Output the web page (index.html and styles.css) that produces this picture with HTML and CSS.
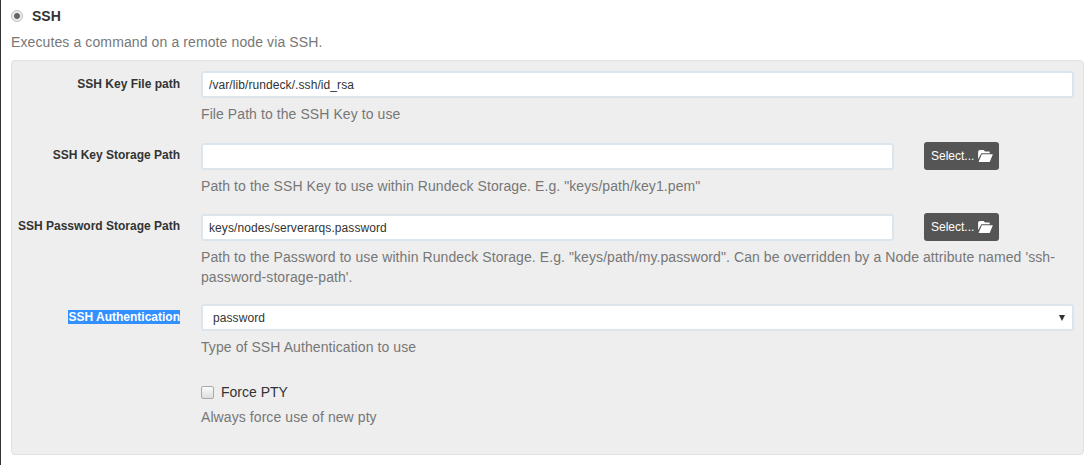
FILE: index.html
```html
<!DOCTYPE html>
<html lang="en">
<head>
  <meta charset="UTF-8" />
  <title>SSH Node Executor</title>
  <link rel="stylesheet" href="styles.css">
</head>
<body>

  <section class="page">
    <label class="provider">
      <input type="radio" class="radio" name="provider" checked>
      <b>SSH</b>
    </label>
    <p class="help provider-help">Executes a command on a remote node via SSH.</p>

    <div class="well">
      <div class="row">
        <label class="row-label">SSH Key File path</label>
        <div class="row-body">
          <input type="text" class="text-field" value="/var/lib/rundeck/.ssh/id_rsa">
          <p class="help">File Path to the SSH Key to use</p>
        </div>
      </div>

      <div class="row">
        <label class="row-label">SSH Key Storage Path</label>
        <div class="row-body">
          <div class="picker">
            <input type="text" class="text-field" value="">
            <button class="btn-select">Select...
              <svg class="folder" viewBox="0 0 16 13"><path d="M2 0h4l1.500 1.500h5V3.500H3.500L0 10V2q0-2 2-2z"/><path d="M4 4.500h12L12.500 13H.500z"/></svg>
            </button>
          </div>
          <p class="help">Path to the SSH Key to use within Rundeck Storage. E.g. "keys/path/key1.pem"</p>
        </div>
      </div>

      <div class="row">
        <label class="row-label">SSH Password Storage Path</label>
        <div class="row-body">
          <div class="picker">
            <input type="text" class="text-field" value="keys/nodes/serverarqs.password">
            <button class="btn-select">Select...
              <svg class="folder" viewBox="0 0 16 13"><path d="M2 0h4l1.500 1.500h5V3.500H3.500L0 10V2q0-2 2-2z"/><path d="M4 4.500h12L12.500 13H.500z"/></svg>
            </button>
          </div>
          <p class="help">Path to the Password to use within Rundeck Storage. E.g. "keys/path/my.password". Can be overridden by a Node attribute named 'ssh-password-storage-path'.</p>
        </div>
      </div>

      <div class="row">
        <label class="row-label"><span class="selected">SSH Authentication</span></label>
        <div class="row-body">
          <div class="select-wrap">
            <select class="text-field select-field">
              <option>password</option>
              <option>privateKey</option>
            </select>
          </div>
          <p class="help">Type of SSH Authentication to use</p>
        </div>
      </div>

      <div class="row row-check">
        <div class="row-label"></div>
        <div class="row-body">
          <label class="check">
            <input type="checkbox" class="checkbox">
            Force PTY
          </label>
          <p class="help">Always force use of new pty</p>
        </div>
      </div>
    </div>
  </section>

</body>
</html>
```

FILE: styles.css
```css
body {
  margin: 0;
  padding: 0;
  font-family: 'Liberation Sans', Arial, sans-serif;
  font-size: 14px;
  color: #333;
  background: #fff;
}

.page {
  height: 465px;
  box-sizing: border-box;
  border-left: 1px solid #333;
  padding: 7px 8px 0 10px;
  overflow: hidden;
}

.provider {
  display: flex;
  align-items: center;
  height: 18px;
  font-size: 14px;
}

.provider b {
  margin-left: 9px;
}

.radio {
  appearance: none;
  width: 12px;
  height: 12px;
  margin: 0;
  border: 1px solid #bdbdbd;
  border-radius: 50%;
  background: radial-gradient(circle, #666 0, #666 2.5px, #ececec 3.5px);
}

.help {
  margin: 0;
  color: #777;
  font-size: 14px;
  line-height: 20px;
  letter-spacing: 0.08px;
}

.provider-help {
  margin-top: 7px;
  letter-spacing: 0.11px;
}

.well {
  box-sizing: border-box;
  height: 395px;
  margin-top: 8px;
  padding: 10px 9px 0 0;
  background: #eee;
  border: 1px solid #e1e1e1;
  border-radius: 4px;
}

.row {
  display: flex;
  margin-bottom: 17px;
}

.row:first-child {
  margin-bottom: 18px;
}

.row-label {
  flex: none;
  box-sizing: border-box;
  width: 168px;
  padding-top: 5px;
  text-align: right;
  font-size: 12px;
  font-weight: bold;
  line-height: 17px;
}

.selected {
  background: #3390ff;
  color: #fff;
}

.row-body {
  flex: 1;
  margin-left: 21px;
  min-width: 0;
}

.row-body .help {
  margin-top: 6px;
}

.text-field {
  display: block;
  box-sizing: border-box;
  width: 100%;
  height: 27px;
  padding: 1px 6px 0;
  background: #fff;
  border: 2px solid #dce4ec;
  border-radius: 3px;
  font-family: inherit;
  font-size: 12px;
  letter-spacing: 0.08px;
  color: #333;
  outline: none;
}

.picker {
  display: flex;
  align-items: center;
  gap: 30px;
}

.picker .text-field {
  width: 693px;
}

.btn-select {
  flex: none;
  display: flex;
  align-items: center;
  gap: 4px;
  box-sizing: border-box;
  width: 75px;
  height: 28px;
  padding: 0 0 0 7px;
  background: #555;
  border: 0;
  border-radius: 3px;
  color: #fff;
  font-family: inherit;
  font-size: 12px;
}

.folder {
  width: 15px;
  height: 12px;
  fill: #fff;
}

.select-wrap {
  position: relative;
}

.select-wrap::after {
  content: "";
  position: absolute;
  right: 9px;
  top: 11px;
  border-left: 3.500px solid transparent;
  border-right: 3.500px solid transparent;
  border-top: 6px solid #333;
}

.select-field {
  appearance: none;
  padding-left: 10px;
}

.row-check {
  margin-top: 25px;
}

.check {
  display: flex;
  align-items: center;
  height: 20px;
  gap: 7px;
  font-size: 14px;
}

.checkbox {
  appearance: none;
  width: 13px;
  height: 13px;
  margin: 0;
  border: 1px solid #a9a9a9;
  border-radius: 2px;
  background: linear-gradient(#fafafa, #dedede);
}

.row-check .help {
  margin-top: 5px;
}
```
